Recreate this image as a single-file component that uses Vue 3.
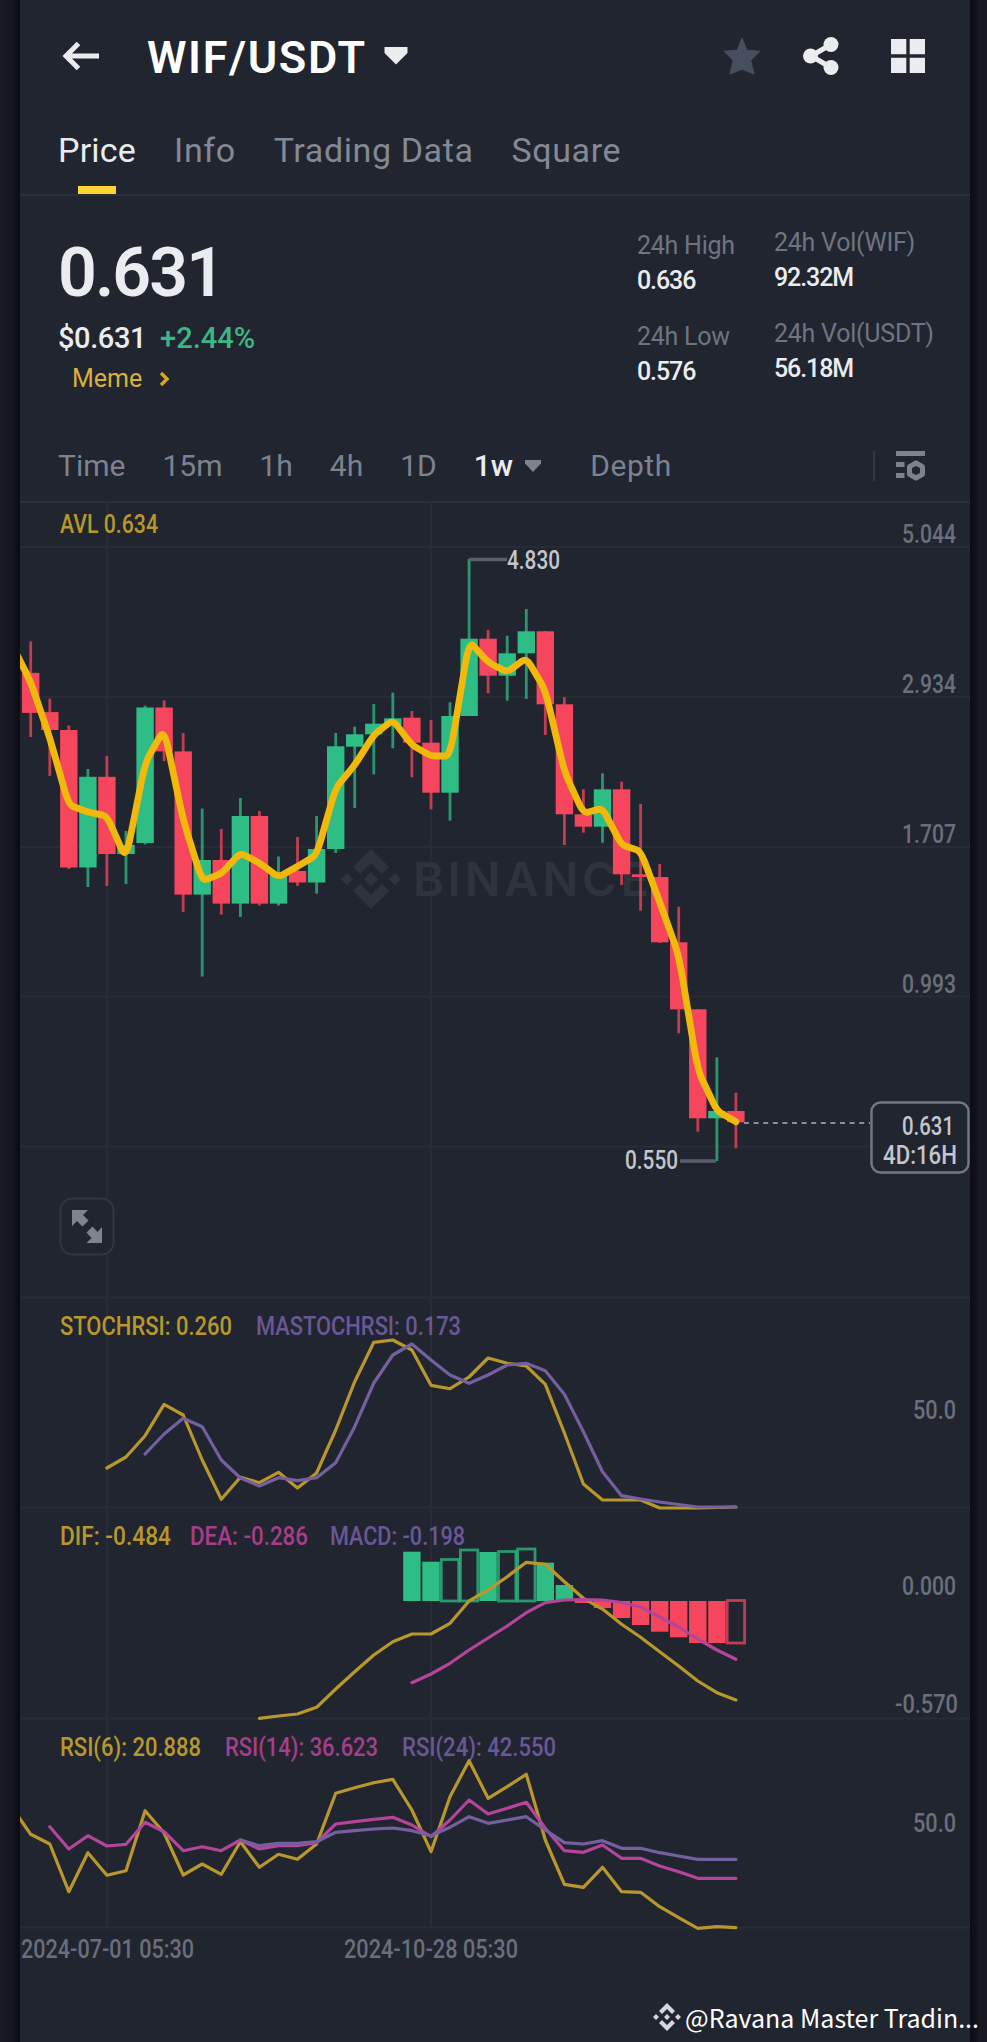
<script setup>
import { ref } from 'vue'

const tabs = ['Price', 'Info', 'Trading Data', 'Square']
const activeTab = ref('Price')

const intervals = ['Time', '15m', '1h', '4h', '1D', '1w', 'Depth']
const activeInterval = ref('1w')

const stats = [
  [
    { label: '24h High', value: '0.636' },
    { label: '24h Low', value: '0.576' }
  ],
  [
    { label: '24h Vol(WIF)', value: '92.32M' },
    { label: '24h Vol(USDT)', value: '56.18M' }
  ]
]

// all panels share the same x scale
const x = (i) => +(30.7 + i * 19.06).toFixed(1)
const line = (start, ys) => ys.map((y, i) => `${x(start + i)},${y}`).join(' ')

// same as line, but with slightly rounded corners
const smooth = (start, ys) => {
  const r = 0.22
  let d = `M${x(start)} ${ys[0]}`
  for (let i = 1; i < ys.length - 1; i++) {
    const px = x(start + i)
    const ax = px - 19.06 * r
    const ay = ys[i] + (ys[i - 1] - ys[i]) * r
    const bx = px + 19.06 * r
    const by = ys[i] + (ys[i + 1] - ys[i]) * r
    d += `L${ax} ${ay}Q${px} ${ys[i]} ${bx} ${by}`
  }
  return d + `L${x(start + ys.length - 1)} ${ys[ys.length - 1]}`
}

// high, body top, body bottom, low, up
const candles = [
  [641.4, 672.9, 712.9, 737, 0],
  [698.6, 712.1, 730, 776, 0],
  [725.4, 730, 867.5, 869, 0],
  [769, 776.8, 867.5, 887, 1],
  [756, 776.8, 854, 886, 0],
  [831, 845, 854, 884, 1],
  [705.7, 707.5, 843, 844.5, 1],
  [700.4, 707.5, 751.4, 761, 0],
  [733, 751.4, 894.6, 912, 0],
  [808.6, 860, 894.6, 976.5, 1],
  [829, 860, 903.6, 914.6, 0],
  [798, 816, 903.6, 917, 1],
  [811, 816, 903.6, 905.5, 0],
  [856.5, 875, 903.6, 905.5, 1],
  [837, 871, 882.5, 886, 0],
  [816, 849, 882.5, 893.6, 1],
  [733, 746.3, 849, 853, 1],
  [726.7, 734.3, 746.7, 808, 1],
  [704, 723.7, 734.3, 774.3, 1],
  [692.7, 718.3, 725, 748.3, 1],
  [711, 717.7, 742.7, 777.3, 0],
  [720, 742.7, 792.7, 809.3, 0],
  [702.3, 716, 792.7, 820.7, 1],
  [559, 638.7, 716, 716, 1],
  [630, 638.7, 675.7, 693.3, 0],
  [635.7, 653.3, 675.7, 700.7, 1],
  [609, 631.3, 653.3, 699, 1],
  [631, 631.3, 704.3, 735, 0],
  [697.3, 704.3, 814.3, 845, 0],
  [789.3, 814.3, 826.7, 832.7, 0],
  [773.3, 789.3, 826.7, 842.7, 1],
  [781.7, 789.3, 874.3, 885, 0],
  [804, 874.3, 877, 910.7, 0],
  [864, 877, 942.3, 943, 0],
  [906.7, 942.3, 1009.3, 1033.3, 0],
  [1009, 1009.3, 1118.3, 1131.7, 0],
  [1057.3, 1111, 1118.3, 1161, 1],
  [1092.7, 1111, 1122.3, 1148.3, 0]
]

const avl = smooth(-1, [
  644, 682, 738, 805, 812, 816, 859, 763, 729, 820, 881, 873.6, 853, 863, 877, 866.4, 855,
  788, 765, 735, 720, 745, 756, 756, 641, 662.3, 672, 658, 690, 771.7, 813.3, 808.3,
  845, 851, 902, 955, 1070, 1110.7, 1121.7
])

const stoch = line(4, [
  1468, 1457, 1435.7, 1404.3, 1415, 1460, 1499.3, 1477.3, 1482.7, 1472.3, 1488, 1473, 1430,
  1381.7, 1342.3, 1340, 1350, 1385.3, 1388.7, 1377, 1358, 1363.3, 1366, 1384.3, 1433, 1484,
  1500, 1500, 1500, 1508, 1508, 1508, 1507.5, 1507
])
const maStoch = line(6, [
  1454, 1434, 1418.3, 1426.7, 1460, 1478, 1486, 1477.7, 1480.7, 1477.7, 1462.7, 1426.7, 1383,
  1355, 1344, 1360, 1375, 1383.3, 1375, 1365, 1363.3, 1370.7, 1394.3, 1431.7, 1471.7, 1495.7,
  1499, 1502, 1504.5, 1507, 1507, 1507
])

// index, top, bottom, up, hollow
const macdBars = [
  [20, 1551.7, 1601, 1, 0],
  [21, 1561.7, 1601, 1, 0],
  [22, 1559.5, 1601, 1, 1],
  [23, 1550, 1601, 1, 1],
  [24, 1552, 1601, 1, 0],
  [25, 1551.5, 1601, 1, 1],
  [26, 1549, 1601, 1, 1],
  [27, 1562.7, 1601, 1, 0],
  [28, 1585, 1601, 1, 0],
  [29, 1600, 1603, 0, 0],
  [30, 1601, 1608, 0, 0],
  [31, 1601, 1618, 0, 0],
  [32, 1601, 1625, 0, 0],
  [33, 1601, 1631.7, 0, 0],
  [34, 1601, 1637.3, 0, 0],
  [35, 1601, 1643, 0, 0],
  [36, 1601, 1643, 0, 0],
  [37, 1600.5, 1643, 0, 1]
]
const dif = line(12, [
  1718.3, 1716, 1714, 1707.3, 1689, 1671.7, 1655, 1641.7, 1634, 1634, 1623.3, 1601, 1590,
  1576.7, 1562.3, 1564.3, 1581.7, 1598.3, 1609, 1624.3, 1637.3, 1651.7, 1666, 1681, 1692.7, 1700
])
const dea = line(20, [
  1682.7, 1674, 1663.3, 1650, 1638, 1626, 1612.7, 1602.7, 1600, 1599.5, 1600, 1602.7, 1607,
  1617, 1627, 1639, 1650, 1659.3
])

const rsi6 = '18,1816 ' + line(0, [
  1834.3, 1844, 1891.7, 1852.7, 1875.3, 1870.7, 1810.7, 1833, 1875, 1864, 1874.3, 1841.7,
  1867.3, 1854.3, 1859.3, 1844, 1793.3, 1787.7, 1782.7, 1779.3, 1810, 1851.7, 1796.7, 1760.7,
  1798.3, 1786.7, 1774.3, 1840, 1884.3, 1887.3, 1867.3, 1891.7, 1892.3, 1906.7, 1917.7, 1928.3,
  1926.7, 1927.7
])
const rsi14 = line(1, [
  1826.7, 1849, 1835.7, 1846, 1844.3, 1822.3, 1831.7, 1850.7, 1846.7, 1850.7, 1840, 1849,
  1845.7, 1845.7, 1842.7, 1824, 1821.7, 1819.3, 1817.3, 1825, 1836.7, 1820, 1800, 1814, 1808.3,
  1802.3, 1828.3, 1850.7, 1852.3, 1845, 1858.3, 1858.3, 1866, 1871.7, 1878.3, 1878.3, 1878.3
])
const rsi24 = line(11, [
  1840, 1845.7, 1843.3, 1843.3, 1841.7, 1832.3, 1830.7, 1829, 1828, 1830.7, 1835.7, 1827.3,
  1816.7, 1823.3, 1820, 1816.7, 1830, 1842.7, 1844, 1840.7, 1848.3, 1848.3, 1852.7, 1856,
  1859.3, 1859.3, 1859.3
])

const gridY = [547, 697, 847, 996.6, 1146.5]
const priceAxis = [
  { y: 542.5, text: '5.044' },
  { y: 692.5, text: '2.934' },
  { y: 842.5, text: '1.707' },
  { y: 992.5, text: '0.993' }
]
</script>

<template>
  <div class="page">
    <div class="phone">
      <header class="header">
        <svg class="back" width="38" height="32" viewBox="0 0 38 32">
          <path d="M16.5 3.5L4 16L16.5 28.5M4 16H37" fill="none" stroke="#eaecef" stroke-width="5" />
        </svg>
        <h1>WIF/USDT</h1>
        <svg class="caret" width="24" height="18" viewBox="0 0 24 18">
          <path d="M.5 0H23.5V6L12 17.5L.5 6Z" fill="#eaecef" />
        </svg>
        <div class="actions">
          <svg width="38" height="38" viewBox="0 0 38 38">
            <path d="M19 1L23.8 13.2L37 14.2L27.8 23.4L31 37L19 32.2L7 37L10.2 23.4L1 14.2L14.2 13.2Z" fill="#474f5e" stroke="#474f5e" stroke-linejoin="round" />
          </svg>
          <svg width="36" height="38" viewBox="0 0 36 38">
            <path d="M28 7.5L8 19L28 30.5" fill="none" stroke="#eaecef" stroke-width="5" />
            <circle cx="28" cy="7.5" r="7.5" fill="#eaecef" />
            <circle cx="7.5" cy="19" r="7.5" fill="#eaecef" />
            <circle cx="28" cy="30.5" r="7.5" fill="#eaecef" />
          </svg>
          <svg width="34" height="34" viewBox="0 0 34 34">
            <path d="M0 0H15.3V15.3H0ZM18.7 0H34V15.3H18.7ZM0 18.7H15.3V34H0ZM18.7 18.7H34V34H18.7Z" fill="#eaecef" />
          </svg>
        </div>
      </header>

      <nav class="tabs">
        <span
          v-for="tab in tabs"
          :key="tab"
          class="tab"
          :class="{ active: tab === activeTab }"
          @click="activeTab = tab"
        >{{ tab }}</span>
      </nav>

      <section class="summary">
        <div class="price">
          <div class="last">0.631</div>
          <div class="fiat"><span>$0.631</span><span class="up">+2.44%</span></div>
          <div class="tag">
            <span>Meme</span>
            <svg width="11" height="16" viewBox="0 0 11 16">
              <path d="M2 2L8 8L2 14" fill="none" stroke="#d9a91c" stroke-width="3.4" />
            </svg>
          </div>
        </div>
        <div v-for="(col, c) in stats" :key="c" class="stats">
          <div v-for="s in col" :key="s.label" class="stat">
            <span class="label">{{ s.label }}</span>
            <span class="value">{{ s.value }}</span>
          </div>
        </div>
      </section>

      <nav class="intervals">
        <span
          v-for="item in intervals"
          :key="item"
          class="interval"
          :class="{ active: item === activeInterval }"
          @click="activeInterval = item"
        >
          {{ item }}
          <svg v-if="item === activeInterval" width="16" height="12" viewBox="0 0 16 12">
            <path d="M0 0H16V3.5L8 12L0 3.5Z" fill="#7d828f" />
          </svg>
        </span>
        <div class="settings">
          <svg width="30" height="30" viewBox="0 0 30 30">
            <path d="M0 0H29V5H0ZM0 11H8.5V16H0ZM0 22H8.5V27H0Z" fill="#7d828f" />
            <path d="M20 12L26.5 15.7V23.3L20 27L13.5 23.3V15.7Z" fill="none" stroke="#7d828f" stroke-width="5" stroke-linejoin="round" />
          </svg>
        </div>
      </nav>

      <!-- price -->
      <svg class="panel" width="950" height="794" viewBox="20 503 950 794">
        <path class="grid" d="M107 503V1297M431 503V1297" />
        <path v-for="y in gridY" :key="y" class="grid" :d="`M20 ${y}H970`" />

        <g fill="#2f333e">
          <path d="M371 849L389 867L382 874L371 863L360 874L353 867ZM371 909L353 891L360 884L371 895L382 884L389 891ZM371 872L378 879L371 886L364 879ZM347 873L353 879L347 885L341 879ZM395 873L401 879L395 885L389 879Z" />
          <text class="watermark" x="413" y="896" textLength="236">BINANCE</text>
        </g>

        <g v-for="(c, i) in candles" :key="i" :class="c[4] ? 'green' : 'red'">
          <rect class="wick" :x="x(i) - 1.4" :y="c[0]" width="2.8" :height="c[3] - c[0]" />
          <rect :x="x(i) - 8.7" :y="c[1]" width="17.4" :height="c[2] - c[1]" />
        </g>
        <path class="avl" :d="avl" />

        <path d="M469 559.5H507M680 1161H716" stroke="#5b5f6b" stroke-width="3.5" />
        <text class="mark" x="507" y="569" textLength="53" lengthAdjust="spacingAndGlyphs">4.830</text>
        <text class="mark" x="625" y="1168.5" textLength="53" lengthAdjust="spacingAndGlyphs">0.550</text>

        <text class="num yellow" x="60" y="532.5" textLength="98" lengthAdjust="spacingAndGlyphs">AVL 0.634</text>
        <text
          v-for="p in priceAxis"
          :key="p.text"
          class="num axis"
          x="902"
          :y="p.y"
          textLength="54"
          lengthAdjust="spacingAndGlyphs"
        >{{ p.text }}</text>

        <path d="M744 1123H870" stroke="#8b8f9a" stroke-width="1.8" stroke-dasharray="5 4.6" />
        <rect x="871.5" y="1102.5" width="97" height="70" rx="9" fill="#212530" stroke="#747884" stroke-width="2.4" />
        <text class="mark" x="902" y="1134.5" textLength="52" lengthAdjust="spacingAndGlyphs">0.631</text>
        <text class="mark" x="883" y="1163.5" textLength="74" lengthAdjust="spacingAndGlyphs">4D:16H</text>

        <rect x="60.5" y="1198.5" width="53" height="56" rx="12" fill="#212530" stroke="#323641" stroke-width="2" />
        <path d="M72 1210H88L83 1215L88.5 1220.5L82.5 1226.5L77 1221L72 1226ZM102 1243H86.5L91.5 1238L86.5 1232.5L92.5 1226.5L97.5 1232L102 1227Z" fill="#7d8592" />
      </svg>

      <!-- stochastic rsi -->
      <svg class="panel" width="950" height="210" viewBox="20 1297 950 210">
        <path class="grid" d="M20 1297.5H970M20 1507.5H970M107 1297V1507M431 1297V1507" />
        <text class="num yellow" x="60" y="1334.5" textLength="172" lengthAdjust="spacingAndGlyphs">STOCHRSI: 0.260</text>
        <text class="num purple" x="256" y="1334.5" textLength="205" lengthAdjust="spacingAndGlyphs">MASTOCHRSI: 0.173</text>
        <polyline class="plot yellow" :points="stoch" />
        <polyline class="plot purple" :points="maStoch" />
        <text class="num axis" x="913" y="1419" textLength="43" lengthAdjust="spacingAndGlyphs">50.0</text>
      </svg>

      <!-- macd -->
      <svg class="panel" width="950" height="211" viewBox="20 1507 950 211">
        <path class="grid" d="M20 1718.5H970M107 1509V1718M431 1509V1718" />
        <text class="num yellow" x="60" y="1545.3" textLength="111" lengthAdjust="spacingAndGlyphs">DIF: -0.484</text>
        <text class="num pink" x="190" y="1545.3" textLength="118" lengthAdjust="spacingAndGlyphs">DEA: -0.286</text>
        <text class="num purple" x="330" y="1545.3" textLength="135" lengthAdjust="spacingAndGlyphs">MACD: -0.198</text>
        <rect
          v-for="b in macdBars"
          :key="b[0]"
          :class="[b[3] ? 'green' : 'red', { hollow: b[4] }]"
          :x="x(b[0]) - 8.7"
          :y="b[1]"
          width="17.4"
          :height="b[2] - b[1]"
        />
        <polyline class="plot yellow" :points="dif" />
        <polyline class="plot pink" :points="dea" />
        <text class="num axis" x="902" y="1594.5" textLength="54" lengthAdjust="spacingAndGlyphs">0.000</text>
        <text class="num axis" x="895" y="1713" textLength="63" lengthAdjust="spacingAndGlyphs">-0.570</text>
      </svg>

      <!-- rsi -->
      <svg class="panel" width="950" height="252" viewBox="20 1718 950 252">
        <path class="grid" d="M20 1927.5H970M107 1720V1927M431 1720V1927" />
        <text class="num yellow" x="60" y="1755.5" textLength="141" lengthAdjust="spacingAndGlyphs">RSI(6): 20.888</text>
        <text class="num pink" x="225" y="1755.5" textLength="153" lengthAdjust="spacingAndGlyphs">RSI(14): 36.623</text>
        <text class="num purple" x="402" y="1755.5" textLength="154" lengthAdjust="spacingAndGlyphs">RSI(24): 42.550</text>
        <polyline class="plot yellow" :points="rsi6" />
        <polyline class="plot pink" :points="rsi14" />
        <polyline class="plot purple" :points="rsi24" />
        <text class="num axis" x="913" y="1832" textLength="43" lengthAdjust="spacingAndGlyphs">50.0</text>
        <text class="num axis" x="21" y="1958" textLength="173" lengthAdjust="spacingAndGlyphs">2024-07-01 05:30</text>
        <text class="num axis" x="344" y="1958" textLength="174" lengthAdjust="spacingAndGlyphs">2024-10-28 05:30</text>
      </svg>
    </div>

    <div class="credit">
      <svg width="28" height="28" viewBox="0 0 28 28">
        <path d="M14 0L22 8L19 11L14 6L9 11L6 8ZM14 28L6 20L9 17L14 22L19 17L22 20ZM14 11L17 14L14 17L11 14ZM3 11L6 14L3 17L0 14ZM25 11L28 14L25 17L22 14Z" fill="#d5d7da" />
      </svg>
      <span>@Ravana Master Tradin...</span>
    </div>
  </div>
</template>

<style>
body {
  margin: 0;
  background: #181822;
}
</style>

<style scoped>
.page {
  position: relative;
  width: 987px;
  height: 2042px;
  overflow: hidden;
  box-sizing: border-box;
  padding: 0 17px 0 20px;
  background: linear-gradient(90deg, #1a1a22 0, #17171f 12px, #0c0d15 18px, #0c0d15 970px, #10111a 976px, #181822 980px);
  font-family: Roboto, "Liberation Sans", sans-serif;
}

.phone {
  height: 100%;
  background: #212530;
}

.header {
  display: flex;
  align-items: center;
  height: 112px;
  padding: 0 45px 0 42px;
}

.header h1 {
  margin: 4px 0 0 47px;
  width: 220px;
  font-size: 45px;
  line-height: 56px;
  font-weight: 600;
  letter-spacing: 1.6px;
  white-space: nowrap;
  color: #fff;
}

.caret {
  margin-left: 17px;
}

.actions {
  display: flex;
  align-items: center;
  margin-left: auto;
}

.actions svg + svg {
  margin-left: 42px;
}

.actions svg:last-child {
  margin-left: 52px;
}

.tabs {
  display: flex;
  align-items: center;
  gap: 38px;
  height: 84px;
  box-sizing: border-box;
  padding: 0 0 6px 38px;
  border-bottom: 2px solid #2b2f3a;
  font-size: 34px;
  font-weight: 450;
  letter-spacing: 0.6px;
  color: #848995;
}

.tab {
  position: relative;
  cursor: pointer;
}

.tab.active {
  letter-spacing: 0.2px;
  color: #eaecef;
}

.tab.active::after {
  content: '';
  position: absolute;
  left: 20px;
  bottom: -24px;
  width: 38px;
  height: 8px;
  background: #fcd535;
}

.summary {
  display: flex;
  height: 234px;
}

.price {
  width: 617px;
  box-sizing: border-box;
  padding: 37px 0 0 38px;
}

.last {
  font-size: 68px;
  line-height: 80px;
  font-weight: 600;
  letter-spacing: -1.9px;
  color: #eaecef;
}

.fiat {
  display: flex;
  gap: 14px;
  margin-top: 7px;
  font-size: 29px;
  line-height: 36px;
  font-weight: 500;
  letter-spacing: -0.4px;
  color: #eaecef;
}

.up {
  letter-spacing: 0;
  color: #3fb585;
}

.tag {
  display: flex;
  align-items: center;
  gap: 17px;
  margin-top: 6px;
  padding-left: 14px;
  font-size: 25px;
  line-height: 34px;
  color: #d9b13b;
}

.stats {
  width: 137px;
  padding-top: 33px;
}

.stats + .stats {
  padding-top: 30px;
}

.stat {
  display: flex;
  flex-direction: column;
  margin-bottom: 22px;
  font-size: 25px;
  white-space: nowrap;
}

.label {
  line-height: 34px;
  letter-spacing: -0.25px;
  color: #6f7481;
}

.value {
  line-height: 35px;
  font-weight: 500;
  letter-spacing: -1.1px;
  color: #eaecef;
}

.intervals {
  display: flex;
  align-items: center;
  gap: 37px;
  height: 73px;
  box-sizing: border-box;
  padding: 0 44px 0 38px;
  border-bottom: 2px solid #2b2f3a;
  font-size: 30px;
  color: #7d828f;
}

.interval {
  cursor: pointer;
}

.interval.active {
  display: flex;
  align-items: center;
  gap: 12px;
  margin-right: 12px;
  font-weight: 500;
  color: #eaecef;
}

.interval:nth-of-type(7) {
  letter-spacing: 0.6px;
}

.settings {
  display: flex;
  margin-left: auto;
  padding-left: 21px;
  border-left: 2px solid #343843;
}

.panel {
  display: block;
  overflow: visible;
  clip-path: inset(-4px 0);
}

.grid {
  fill: none;
  stroke: #282c37;
  stroke-width: 2;
}

.watermark {
  font-family: Inter, sans-serif;
  font-size: 47px;
  font-weight: 600;
}

.green {
  fill: #2ebd85;
  color: #2ebd85;
}

.red {
  fill: #f6465d;
  color: #f6465d;
}

.wick {
  opacity: 0.75;
}

.hollow {
  fill: #212530;
  stroke: currentColor;
  stroke-width: 2.8;
  stroke-opacity: 0.75;
}

.avl {
  fill: none;
  stroke: #f0b90b;
  stroke-width: 6.8;
  stroke-linejoin: round;
  stroke-linecap: round;
}

.num {
  font-size: 25px;
  font-weight: 500;
}

.num.yellow {
  fill: #b8982c;
}

.num.purple {
  fill: #6a5896;
}

.num.pink {
  fill: #a63e8b;
}

.num.axis {
  fill: #6b6f7b;
}

.mark {
  font-size: 25px;
  font-weight: 500;
  fill: #c3c6cd;
}

.plot {
  fill: none;
  stroke-width: 3.2;
  stroke-linejoin: round;
  stroke-linecap: round;
}

.plot.yellow {
  stroke: #b8982c;
}

.plot.purple {
  stroke: #74609f;
}

.plot.pink {
  stroke: #b4459a;
}

.credit {
  position: absolute;
  right: 8px;
  bottom: 8px;
  display: flex;
  align-items: center;
  gap: 4px;
  font-family: "Noto Sans CJK SC", sans-serif;
  font-size: 25px;
  line-height: 34px;
  color: #fff;
}
</style>
